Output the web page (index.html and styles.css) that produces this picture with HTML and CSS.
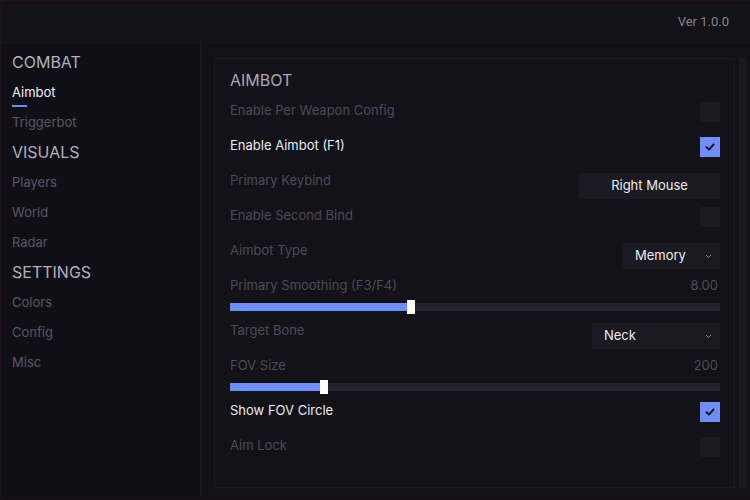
FILE: index.html
```html
<!DOCTYPE html>
<html lang="en">
<head>
    <meta charset="UTF-8">
    <title>Menu</title>
    <link rel="stylesheet" href="styles.css">
</head>
<body>
    <div class="app">
        <div class="topbar">
            <span class="version">Ver 1.0.0</span>
        </div>
        <div class="main">
            <div class="sidebar">
                <div class="nav-head">COMBAT</div>
                <div class="nav-item active">Aimbot</div>
                <div class="nav-item">Triggerbot</div>
                <div class="nav-head">VISUALS</div>
                <div class="nav-item">Players</div>
                <div class="nav-item">World</div>
                <div class="nav-item">Radar</div>
                <div class="nav-head">SETTINGS</div>
                <div class="nav-item">Colors</div>
                <div class="nav-item">Config</div>
                <div class="nav-item">Misc</div>
            </div>
            <div class="content">
                <div class="panel">
                    <div class="panel-title">AIMBOT</div>

                    <div class="row">
                        <span class="label">Enable Per Weapon Config</span>
                        <span class="check"></span>
                    </div>
                    <div class="row">
                        <span class="label on">Enable Aimbot (F1)</span>
                        <span class="check checked">
                            <svg width="12" height="12" viewBox="0 0 12 12"><path d="M2.5 6.2 L5 8.6 L9.6 3.4" fill="none" stroke="#15161f" stroke-width="2" stroke-linecap="round" stroke-linejoin="round"/></svg>
                        </span>
                    </div>
                    <div class="row">
                        <span class="label">Primary Keybind</span>
                        <span class="keybind">Right Mouse</span>
                    </div>
                    <div class="row">
                        <span class="label">Enable Second Bind</span>
                        <span class="check"></span>
                    </div>
                    <div class="row">
                        <span class="label">Aimbot Type</span>
                        <span class="select select-type">
                            <span>Memory</span>
                            <svg width="7" height="5" viewBox="0 0 7 5"><path d="M1 1 L3.5 3.5 L6 1" fill="none" stroke="#7c7b88" stroke-width="1"/></svg>
                        </span>
                    </div>
                    <div class="row slider-row">
                        <div class="slider-head">
                            <span class="label">Primary Smoothing (F3/F4)</span>
                            <span class="value">8.00</span>
                        </div>
                        <div class="track">
                            <div class="fill" style="width: 36.1%"></div>
                            <div class="thumb"></div>
                        </div>
                    </div>
                    <div class="row">
                        <span class="label">Target Bone</span>
                        <span class="select select-bone">
                            <span>Neck</span>
                            <svg width="7" height="5" viewBox="0 0 7 5"><path d="M1 1 L3.5 3.5 L6 1" fill="none" stroke="#7c7b88" stroke-width="1"/></svg>
                        </span>
                    </div>
                    <div class="row slider-row">
                        <div class="slider-head">
                            <span class="label">FOV Size</span>
                            <span class="value">200</span>
                        </div>
                        <div class="track">
                            <div class="fill" style="width: 18.4%"></div>
                            <div class="thumb"></div>
                        </div>
                    </div>
                    <div class="row">
                        <span class="label on">Show FOV Circle</span>
                        <span class="check checked">
                            <svg width="12" height="12" viewBox="0 0 12 12"><path d="M2.5 6.2 L5 8.6 L9.6 3.4" fill="none" stroke="#15161f" stroke-width="2" stroke-linecap="round" stroke-linejoin="round"/></svg>
                        </span>
                    </div>
                    <div class="row">
                        <span class="label">Aim Lock</span>
                        <span class="check"></span>
                    </div>
                </div>
                <div class="scrollbar"></div>
            </div>
        </div>
    </div>
</body>
</html>
```

FILE: styles.css
```css
* {
    box-sizing: border-box;
}
body {
    margin: 0;
    background: #100f15;
    font-family: 'Inter', 'Noto Sans', sans-serif;
    color: #e8e8ef;
}
.app {
    width: 750px;
    height: 500px;
    display: flex;
    flex-direction: column;
    background: #110f16;
    border-top: 1px solid #24151a;
    border-left: 1px solid #1f1319;
    border-bottom: 4px solid #150f13;
}
.topbar {
    height: 42px;
    flex-shrink: 0;
    display: flex;
    align-items: center;
    justify-content: flex-end;
    padding-right: 21px;
    background: #131218;
    border-bottom: 1px solid #17161d;
}
.version {
    font-family: 'Roboto', sans-serif;
    font-size: 13px;
    color: #85848f;
}
.main {
    flex: 1;
    display: flex;
    min-height: 0;
}
.sidebar {
    width: 199px;
    flex-shrink: 0;
    padding-top: 4px;
    background: #110f16;
}
.nav-head,
.nav-item {
    height: 30px;
    line-height: 30px;
    padding-left: 11px;
}
.nav-head {
    font-size: 16px;
    color: #b2b1bd;
}
.nav-item {
    font-size: 13px;
    color: #585763;
}
.nav-item.active {
    color: #f0f0f5;
    background: linear-gradient(#6f8cff, #6f8cff) no-repeat 11px 28px / 15px 2px;
}
.content {
    flex: 1;
    display: flex;
    gap: 4px;
    padding: 15px 3px 8px 13px;
    background: #121117;
    border-left: 1px solid #1a1920;
}
.panel {
    flex: 1;
    padding: 11px 14px 0 15px;
    background: #131218;
    border: 1px solid #1c1b23;
}
.panel-title {
    height: 20px;
    line-height: 20px;
    font-size: 16px;
    color: #a9a8b5;
    margin-bottom: 10px;
}
.row {
    height: 35px;
    display: flex;
    justify-content: space-between;
    align-items: flex-start;
}
.label {
    font-size: 13px;
    line-height: 20px;
    color: #4c4b57;
}
.label.on {
    color: #ececf2;
}
.check {
    width: 20px;
    height: 20px;
    margin-top: 2px;
    background: #1c1b24;
    display: flex;
    align-items: center;
    justify-content: center;
}
.check.checked {
    background: #6f8dfc;
}
.keybind {
    width: 141px;
    height: 26px;
    margin-top: 3px;
    padding-bottom: 2px;
    background: #1b1a23;
    font-size: 13px;
    line-height: 24px;
    text-align: center;
    color: #ececf2;
}
.select {
    height: 26px;
    margin-top: 3px;
    padding: 0 8px 2px 12px;
    background: #1b1a23;
    display: flex;
    align-items: center;
    justify-content: space-between;
    font-size: 13px;
    color: #ececf2;
}
.select svg {
    margin-top: 2px;
}
.select-type {
    width: 97px;
}
.select-bone {
    width: 128px;
}
.slider-row {
    height: 45px;
    flex-direction: column;
    justify-content: flex-start;
    align-items: stretch;
}
.slider-head {
    display: flex;
    justify-content: space-between;
}
.value {
    font-size: 13px;
    line-height: 20px;
    color: #4c4b57;
    padding-right: 2px;
}
.track {
    height: 8px;
    margin-top: 8px;
    background: #23222c;
    display: flex;
    align-items: center;
}
.fill {
    height: 100%;
    background: #6f8dfc;
}
.thumb {
    width: 8px;
    height: 14px;
    flex-shrink: 0;
    background: #ffffff;
}
.scrollbar {
    width: 8px;
    background: #19181f;
    border-left: 1px solid #1c1b22;
}
```
